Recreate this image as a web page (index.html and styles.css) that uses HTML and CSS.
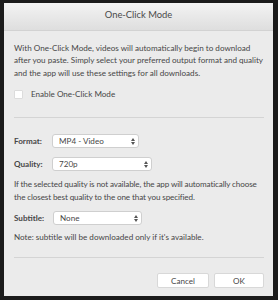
FILE: index.html
```html
<!DOCTYPE html>
<html>
<head>
<meta charset="utf-8">
<link rel="stylesheet" href="styles.css">
</head>
<body>
<div class="dialog">
  <div class="titlebar">One-Click Mode</div>
  <div class="content">
    <p class="intro">With One-Click Mode, videos will automatically begin to download after you paste. Simply select your preferred output format and quality and the app will use these settings for all downloads.</p>
    <label class="check"><span class="box"></span>Enable One-Click Mode</label>
    <div class="sep sep1"></div>
    <div class="row row-format">
      <span class="lbl">Format:</span>
      <span class="select w-format">MP4 - Video<span class="arrows"></span></span>
    </div>
    <div class="row row-quality">
      <span class="lbl">Quality:</span>
      <span class="select w-quality">720p<span class="arrows"></span></span>
    </div>
    <p class="hint">If the selected quality is not available, the app will automatically choose the closest best quality to the one that you specified.</p>
    <div class="row row-sub">
      <span class="lbl">Subtitle:</span>
      <span class="select w-sub">None<span class="arrows"></span></span>
    </div>
    <p class="note">Note: subtitle will be downloaded only if it's available.</p>
    <div class="sep sep2"></div>
    <div class="buttons">
      <span class="btn">Cancel</span>
      <span class="btn">OK</span>
    </div>
  </div>
</div>
</body>
</html>
```

FILE: styles.css
```css
html, body {
  margin: 0;
  padding: 0;
  background: #1b1b1b;
}
body {
  width: 278px;
  height: 300px;
  overflow: hidden;
  font-family: Lato, "Open Sans", sans-serif;
  color: #474747;
}
.dialog {
  margin: 3px 0 0 4px;
  width: 269px;
  height: 293px;
  background: #ebebeb;
  display: flex;
  flex-direction: column;
}
.titlebar {
  height: 27px;
  line-height: 23px;
  text-align: center;
  font-size: 9.4px;
  color: #4a4a4a;
  background: linear-gradient(#f3f3f3, #dedede);
  border-bottom: 1px solid #d2d2d2;
}
.content {
  padding: 11px 9px 0 10px;
  font-size: 8.1px;
}
p {
  margin: 0;
}
.intro {
  line-height: 12.4px;
  width: 252px;
}
.check {
  display: flex;
  align-items: center;
  margin-top: 10px;
  gap: 8px;
}
.box {
  width: 7px;
  height: 7px;
  background: #fff;
  border: 1px solid #dcdcdc;
  border-radius: 1px;
}
.sep {
  height: 1px;
  background: #d4d4d4;
}
.sep1 {
  margin-top: 18px;
}
.row {
  display: flex;
  align-items: center;
  height: 15px;
}
.row-format { margin-top: 15px; }
.row-quality { margin-top: 8px; }
.row-sub { margin-top: 6px; }
.lbl {
  font-weight: bold;
  width: 38px;
  flex: none;
}
.select {
  position: relative;
  height: 14px;
  line-height: 13px;
  box-sizing: border-box;
  background: #fff;
  border: 1px solid #cfcfcf;
  border-radius: 3px;
  padding-left: 6px;
}
.w-format { width: 87px; }
.w-quality { width: 100px; }
.w-sub { width: 89px; margin-left: 1px; }
.arrows {
  position: absolute;
  right: 5px;
  top: 3px;
  width: 0;
  height: 7px;
}
.arrows::before, .arrows::after {
  content: "";
  position: absolute;
  left: -2px;
  border-left: 2px solid transparent;
  border-right: 2px solid transparent;
}
.arrows::before {
  top: 0;
  border-bottom: 3px solid #555;
}
.arrows::after {
  bottom: 0;
  border-top: 3px solid #555;
}
.hint {
  margin-top: 7px;
  line-height: 13px;
  width: 254px;
  letter-spacing: -0.12px;
  margin-right: -6px;
}
.note {
  margin-top: 7px;
}
.sep2 {
  margin-top: 15px;
}
.buttons {
  display: flex;
  justify-content: flex-end;
  gap: 5px;
  margin-top: 15px;
}
.btn {
  width: 52px;
  height: 15px;
  line-height: 14px;
  box-sizing: border-box;
  text-align: center;
  background: #fff;
  border: 1px solid #d8d8d8;
  border-radius: 2px;
}
.buttons .btn:last-child {
  width: 50px;
}
```
